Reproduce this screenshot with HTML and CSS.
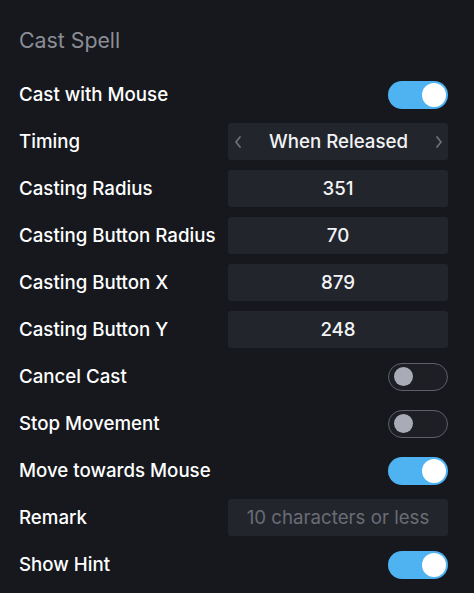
FILE: index.html
```html
<!DOCTYPE html>
<html>
<head>
<meta charset="utf-8">
<link rel="stylesheet" href="styles.css">
</head>
<body>
<div class="panel">
  <h2 class="title">Cast Spell</h2>
  <div class="rows">
    <div class="row"><span class="label">Cast with Mouse</span><span class="toggle on"><span class="knob"></span></span></div>
    <div class="row"><span class="label">Timing</span>
      <div class="box select">
        <svg class="chev" width="10" height="14" viewBox="0 0 10 14"><path d="M7 2 L3 7 L7 12" fill="none" stroke="#6d7078" stroke-width="1.8" stroke-linecap="round" stroke-linejoin="round"/></svg>
        <span class="value">When Released</span>
        <svg class="chev" width="10" height="14" viewBox="0 0 10 14"><path d="M3 2 L7 7 L3 12" fill="none" stroke="#6d7078" stroke-width="1.8" stroke-linecap="round" stroke-linejoin="round"/></svg>
      </div>
    </div>
    <div class="row"><span class="label">Casting Radius</span><div class="box"><span class="value">351</span></div></div>
    <div class="row"><span class="label">Casting Button Radius</span><div class="box"><span class="value">70</span></div></div>
    <div class="row"><span class="label">Casting Button X</span><div class="box"><span class="value">879</span></div></div>
    <div class="row"><span class="label">Casting Button Y</span><div class="box"><span class="value">248</span></div></div>
    <div class="row"><span class="label">Cancel Cast</span><span class="toggle off"><span class="knob"></span></span></div>
    <div class="row"><span class="label">Stop Movement</span><span class="toggle off"><span class="knob"></span></span></div>
    <div class="row"><span class="label">Move towards Mouse</span><span class="toggle on"><span class="knob"></span></span></div>
    <div class="row"><span class="label">Remark</span><div class="box"><span class="placeholder">10 characters or less</span></div></div>
    <div class="row"><span class="label">Show Hint</span><span class="toggle on"><span class="knob"></span></span></div>
  </div>
</div>
</body>
</html>
```
FILE: styles.css
```css
html, body {
  margin: 0;
  padding: 0;
  background: #16181e;
}
body {
  width: 474px;
  height: 593px;
  overflow: hidden;
  font-family: Inter, "Noto Sans", sans-serif;
  -webkit-font-smoothing: antialiased;
}
.panel {
  padding: 27px 26px 0 19px;
}
.title {
  margin: 0;
  font-size: 21.3px;
  font-weight: 400;
  color: #8b8e95;
  line-height: 26px;
  height: 26px;
}
.rows {
  margin-top: 23px;
  display: flex;
  flex-direction: column;
  gap: 10px;
}
.row {
  height: 37px;
  display: flex;
  align-items: center;
  justify-content: space-between;
}
.label {
  font-size: 18.7px;
  color: #ffffff;
  font-weight: 500;
}
.box {
  width: 220px;
  height: 37px;
  background: #23252c;
  border-radius: 3px;
  display: flex;
  align-items: center;
  justify-content: center;
  font-size: 18.7px;
  font-weight: 500;
  color: #f2f3f5;
}
.select {
  justify-content: space-between;
  padding: 0 4px 0 5px;
  box-sizing: border-box;
}
.placeholder {
  color: #6a6d75;
  font-weight: 400;
}
.toggle {
  width: 60px;
  height: 28px;
  border-radius: 14px;
  box-sizing: border-box;
  display: flex;
  align-items: center;
}
.toggle.on {
  background: #4fb2f1;
  justify-content: flex-end;
  padding-right: 2px;
}
.toggle.on .knob {
  width: 24px;
  height: 24px;
  border-radius: 50%;
  background: #ffffff;
}
.toggle.off {
  background: #1d1f25;
  border: 1.5px solid #5d6067;
  padding-left: 5px;
}
.toggle.off .knob {
  width: 19px;
  height: 19px;
  border-radius: 50%;
  background: #a9acb6;
}
```
